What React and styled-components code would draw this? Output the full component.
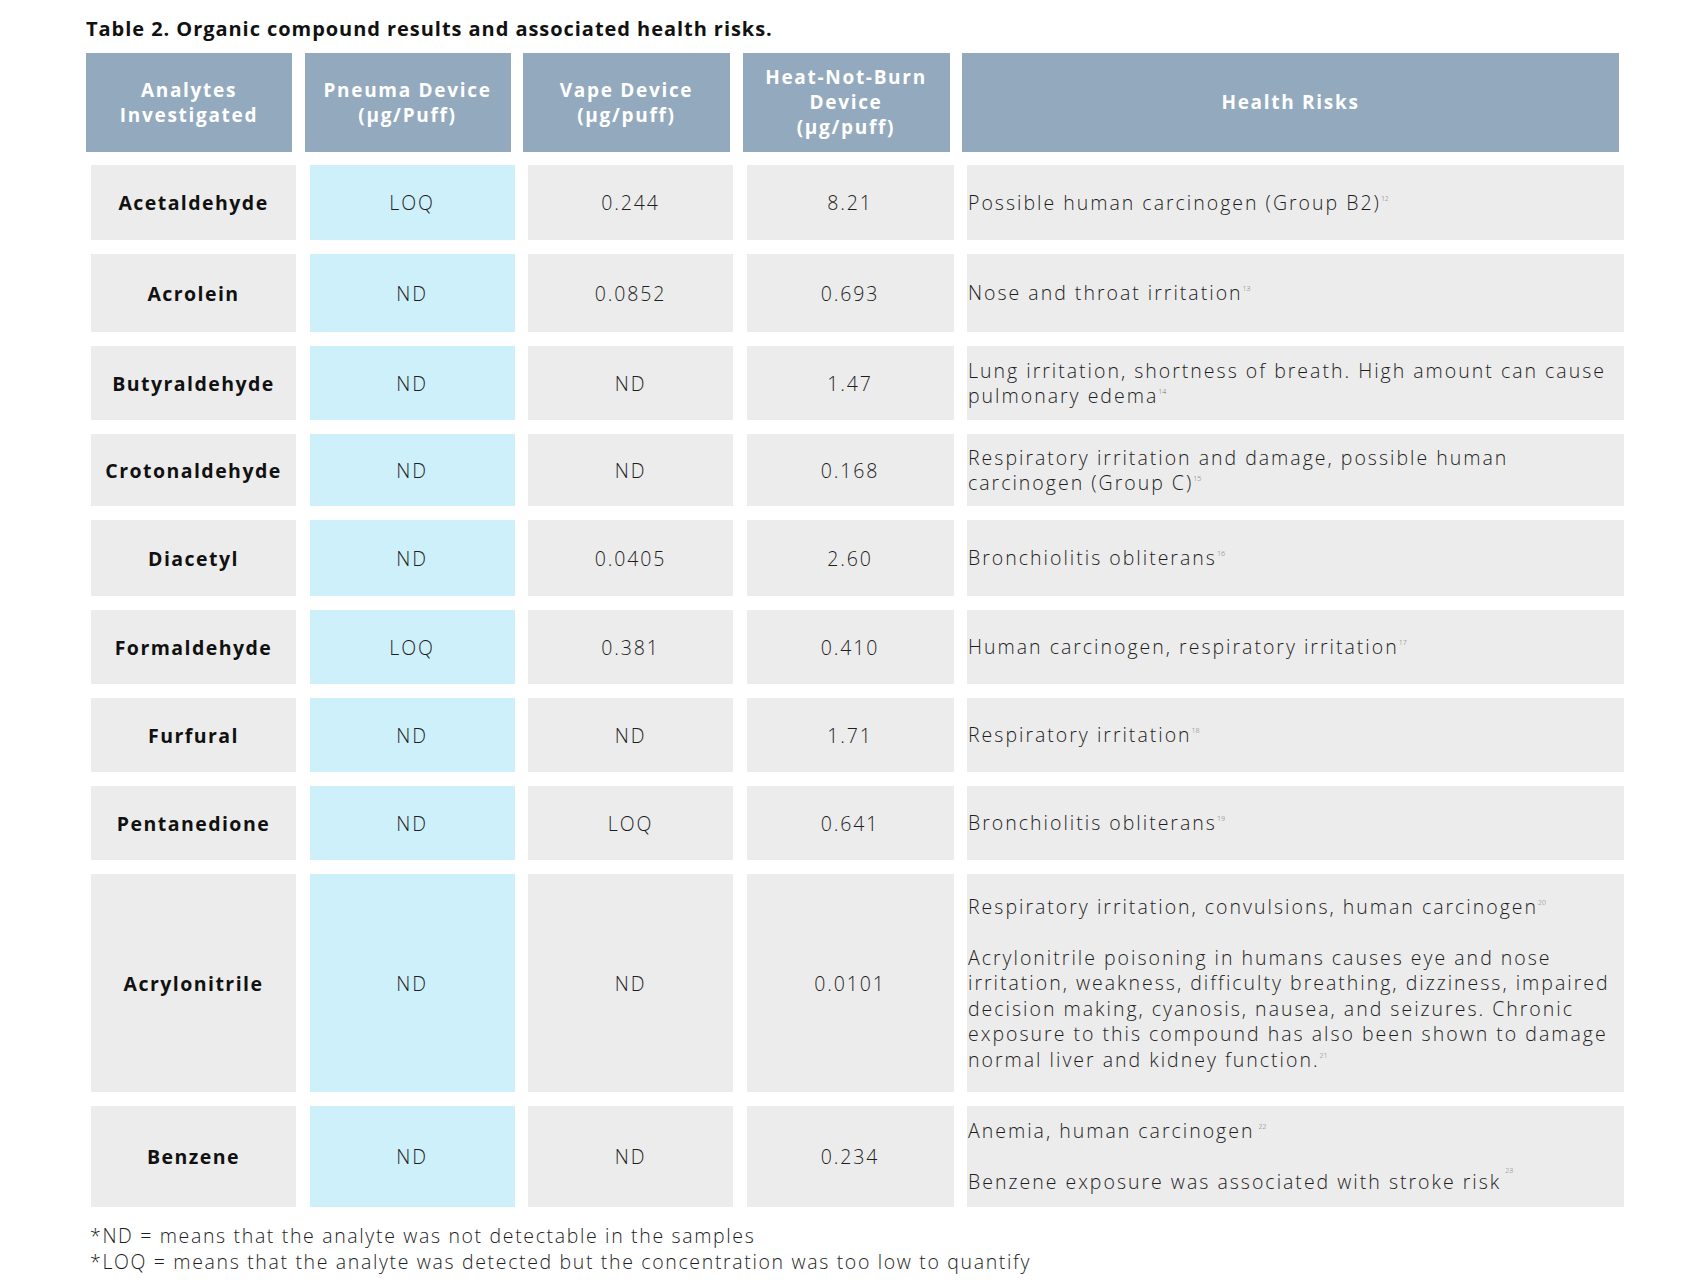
import styled, { createGlobalStyle } from "styled-components";

const GlobalStyle = createGlobalStyle`
  body {
    margin: 0;
    background: #ffffff;
    font-family: "Open Sans", "Liberation Sans", sans-serif;
    color: #222;
  }
`;

const Page = styled.div`
  padding: 17px 0 20px 86px;
  width: 1620px;
`;

const Title = styled.h2`
  margin: 0;
  font-size: 20px;
  line-height: 24px;
  font-weight: 700;
  color: #111;
  letter-spacing: 0.95px;
`;

const HeaderRow = styled.div`
  display: grid;
  grid-template-columns: 206px 206px 207px 207px 657px;
  column-gap: 12.5px;
  margin-top: 12px;
  height: 99px;
`;

const HeadCell = styled.div`
  background: #93aabe;
  color: #ffffff;
  font-weight: 700;
  font-size: 19px;
  line-height: 25px;
  letter-spacing: 1.7px;
  display: flex;
  align-items: center;
  justify-content: center;
  text-align: center;
`;

const Body = styled.div`
  display: flex;
  flex-direction: column;
  gap: 14px;
  margin-top: 13px;
  padding-left: 5px;
`;

const Row = styled.div`
  display: grid;
  grid-template-columns: 205px 205px 205px 207px 657px;
  column-gap: 13.5px;
  height: ${(p) => p.h}px;
`;

const Cell = styled.div`
  background: ${(p) => (p.tint ? "#cdf0fb" : "#ececec")};
  display: flex;
  align-items: center;
  justify-content: center;
  font-size: 19.5px;
  font-weight: 300;
  letter-spacing: 1.9px;
  color: #1e1e1e;
`;

const NameCell = styled(Cell)`
  font-size: 19.5px;
  font-weight: 700;
  color: #111;
  letter-spacing: 1.45px;
`;

const RiskCell = styled.div`
  background: #ececec;
  display: flex;
  flex-direction: column;
  justify-content: center;
  padding: 0 8px 0 1px;
  font-size: 19.5px;
  font-weight: 300;
  line-height: 25.5px;
  letter-spacing: 2px;
  color: #1e1e1e;
`;

const Para = styled.p`
  margin: 0;
  & + & {
    margin-top: 25.5px;
  }
`;

const Ref = styled.sup`
  font-size: 7px;
  line-height: 0;
  color: #6f6f6f;
  letter-spacing: 0;
  margin-left: ${(p) => (p.gap ? "4px" : "0")};
  vertical-align: ${(p) => (p.high ? "16px" : "9px")};
`;

const Notes = styled.div`
  margin-top: 16px;
  padding-left: 4px;
  font-size: 19.5px;
  font-weight: 300;
  line-height: 26px;
  letter-spacing: 1.65px;
  color: #1e1e1e;
`;

const rows = [
  { name: "Acetaldehyde", pneuma: "LOQ", vape: "0.244", hnb: "8.21", h: 75,
    risk: [{ text: "Possible human carcinogen (Group B2)", ref: "12" }] },
  { name: "Acrolein", pneuma: "ND", vape: "0.0852", hnb: "0.693", h: 78,
    risk: [{ text: "Nose and throat irritation", ref: "13" }] },
  { name: "Butyraldehyde", pneuma: "ND", vape: "ND", hnb: "1.47", h: 74,
    risk: [{ text: "Lung irritation, shortness of breath. High amount can cause pulmonary edema", ref: "14" }] },
  { name: "Crotonaldehyde", pneuma: "ND", vape: "ND", hnb: "0.168", h: 72,
    risk: [{ text: "Respiratory irritation and damage, possible human carcinogen (Group C)", ref: "15" }] },
  { name: "Diacetyl", pneuma: "ND", vape: "0.0405", hnb: "2.60", h: 76,
    risk: [{ text: "Bronchiolitis obliterans", ref: "16" }] },
  { name: "Formaldehyde", pneuma: "LOQ", vape: "0.381", hnb: "0.410", h: 74,
    risk: [{ text: "Human carcinogen, respiratory irritation", ref: "17" }] },
  { name: "Furfural", pneuma: "ND", vape: "ND", hnb: "1.71", h: 74,
    risk: [{ text: "Respiratory irritation", ref: "18" }] },
  { name: "Pentanedione", pneuma: "ND", vape: "LOQ", hnb: "0.641", h: 74,
    risk: [{ text: "Bronchiolitis obliterans", ref: "19" }] },
  { name: "Acrylonitrile", pneuma: "ND", vape: "ND", hnb: "0.0101", h: 218,
    risk: [
      { text: "Respiratory irritation, convulsions, human carcinogen", ref: "20" },
      { text: "Acrylonitrile poisoning in humans causes eye and nose irritation, weakness, difficulty breathing, dizziness, impaired decision making, cyanosis, nausea, and seizures. Chronic exposure to this compound has also been shown to damage normal liver and kidney function.", ref: "21" },
    ] },
  { name: "Benzene", pneuma: "ND", vape: "ND", hnb: "0.234", h: 101,
    risk: [
      { text: "Anemia, human carcinogen", ref: "22", gap: true },
      { text: "Benzene exposure was associated with stroke risk", ref: "23", gap: true, high: true },
    ] },
];

export default function App() {
  return (
    <>
      <GlobalStyle />
      <Page>
        <Title>Table 2. Organic compound results and associated health risks.</Title>
        <HeaderRow>
          <HeadCell>Analytes<br />Investigated</HeadCell>
          <HeadCell>Pneuma Device<br />(µg/Puff)</HeadCell>
          <HeadCell>Vape Device<br />(µg/puff)</HeadCell>
          <HeadCell>Heat-Not-Burn<br />Device<br />(µg/puff)</HeadCell>
          <HeadCell>Health Risks</HeadCell>
        </HeaderRow>
        <Body>
          {rows.map((r) => (
            <Row key={r.name} h={r.h}>
              <NameCell>{r.name}</NameCell>
              <Cell tint>{r.pneuma}</Cell>
              <Cell>{r.vape}</Cell>
              <Cell>{r.hnb}</Cell>
              <RiskCell>
                {r.risk.map((p) => (
                  <Para key={p.ref}>
                    {p.text}
                    <Ref gap={p.gap} high={p.high}>{p.ref}</Ref>
                  </Para>
                ))}
              </RiskCell>
            </Row>
          ))}
        </Body>
        <Notes>
          *ND = means that the analyte was not detectable in the samples
          <br />
          *LOQ = means that the analyte was detected but the concentration was too low to quantify
        </Notes>
      </Page>
    </>
  );
}
